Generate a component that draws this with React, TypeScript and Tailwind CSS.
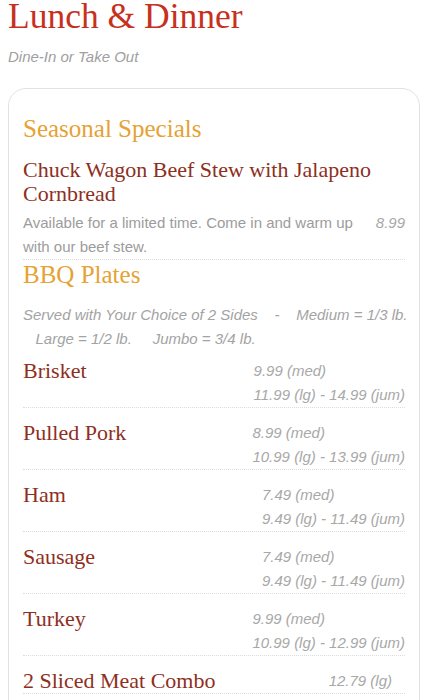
import React from "react";

type Row = { name: string; l1: string; l2?: string; last?: boolean };

const rows: Row[] = [
  { name: "Brisket", l1: "9.99 (med)", l2: "11.99 (lg) - 14.99 (jum)" },
  { name: "Pulled Pork", l1: "8.99 (med)", l2: "10.99 (lg) - 13.99 (jum)" },
  { name: "Ham", l1: "7.49 (med)", l2: "9.49 (lg) - 11.49 (jum)" },
  { name: "Sausage", l1: "7.49 (med)", l2: "9.49 (lg) - 11.49 (jum)" },
  { name: "Turkey", l1: "9.99 (med)", l2: "10.99 (lg) - 12.99 (jum)" },
  { name: "2 Sliced Meat Combo", l1: "12.79 (lg)", last: true },
];

export default function App() {
  return (
    <div className="w-[427px] h-[700px] overflow-hidden bg-white">
      <div className="pl-2 pr-[7px]">
        <h1 className="text-[35.5px] leading-[32px] text-[#c8301d] font-normal font-['Liberation_Serif',serif]">
          Lunch &amp; Dinner
        </h1>
        <p className="mt-[15px] text-[15px] leading-[20px] italic text-[#a0a0a0] font-['Liberation_Sans',Arial,sans-serif]">
          Dine-In or Take Out
        </p>
        <div className="mt-[21px] rounded-[18px] border border-[#e2e2e2] px-[14px] pt-[25px] pb-10">
          <h2 className="text-[25px] leading-[30px] text-[#e6a233] font-['Liberation_Serif',serif]">
            Seasonal Specials
          </h2>
          <div className="mt-[14px] border-b border-dotted border-[#dcdcdc]">
            <div className="text-[22px] leading-[24px] text-[#8e2f1e] font-['Liberation_Serif',serif]">
              Chuck Wagon Beef Stew with Jalapeno Cornbread
            </div>
            <div className="mt-[5px] flex justify-between font-['Liberation_Sans',Arial,sans-serif] text-[15px] leading-[24px]">
              <p className="w-[340px] text-[#9c9c9c]">
                Available for a limited time. Come in and warm up with our beef stew.
              </p>
              <span className="italic text-[#a8a8a8]">8.99</span>
            </div>
          </div>
          <h2 className="text-[25px] leading-[30px] text-[#e6a233] font-['Liberation_Serif',serif]">
            BBQ Plates
          </h2>
          <div className="mt-[13px] text-[15px] leading-[24px] italic text-[#a3a3a3] whitespace-pre font-['Liberation_Sans',Arial,sans-serif]">
            <div>{"Served with Your Choice of 2 Sides    -    Medium = 1/3 lb."}</div>
            <div>{"   Large = 1/2 lb.     Jumbo = 3/4 lb."}</div>
          </div>
          {rows.map((r, i) => (
            <div
              key={r.name}
              className={
                i === 0
                  ? "flex justify-between pt-[8px] border-b border-dotted border-[#dcdcdc]"
                  : "flex justify-between pt-[13px] border-b border-dotted border-[#dcdcdc]"
              }
            >
              <div className="text-[22px] leading-[24px] text-[#8e2f1e] font-['Liberation_Serif',serif]">
                {r.name}
              </div>
              <div
                className={
                  r.last
                    ? "mr-[13px] text-[15px] leading-[24px] italic text-[#a8a8a8] font-['Liberation_Sans',Arial,sans-serif]"
                    : "text-[15px] leading-[24px] italic text-[#a8a8a8] font-['Liberation_Sans',Arial,sans-serif]"
                }
              >
                <div>{r.l1}</div>
                {r.l2 && <div>{r.l2}</div>}
              </div>
            </div>
          ))}
        </div>
      </div>
    </div>
  );
}
